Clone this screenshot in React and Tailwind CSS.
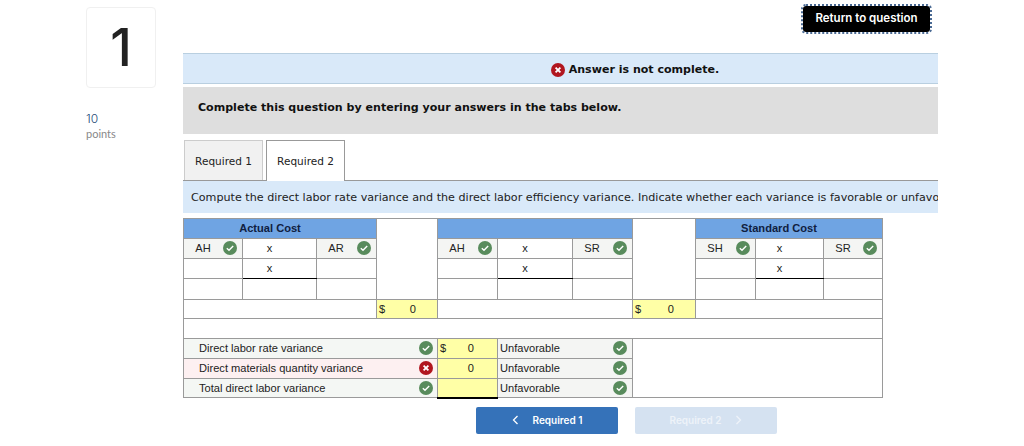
import React from 'react';

const StatusIcon = ({ ok = true, size = 14 }) => (
  <svg width={size} height={size} viewBox="0 0 14 14" className="shrink-0">
    <circle cx="7" cy="7" r="7" fill={ok ? '#588b5c' : '#b1161f'} />
    {ok ? (
      <path d="M3.8 7.2l2.2 2.1 4.2-4.4" fill="none" stroke="#fff" strokeWidth="1.4" />
    ) : (
      <path d="M4.6 4.6l4.8 4.8M9.4 4.6l-4.8 4.8" fill="none" stroke="#fff" strokeWidth="1.8" />
    )}
  </svg>
);

const widths = [59, 74, 60, 61, 60, 75, 60, 63, 60, 68, 59];
const cell = 'border border-[#9a9a9a] p-0 text-[11.1px]';
const headCell = `${cell} bg-[#6fa4e3] pr-[20px] text-center font-bold text-[#10203f]`;
const timesCell = `${cell} pr-[20px]`;

const LabelCell = ({ label }) => (
  <td className={`${cell} bg-[#f4f5f3]`}>
    <div className="flex items-center justify-between pl-[4px] pr-[5px]">
      <span className="w-[30px] pb-[1px] text-center">{label}</span>
      <StatusIcon />
    </div>
  </td>
);

const VarianceRow = ({ label, ok = true, dollar, value, underline, height = 'h-[20px]', children }) => (
  <tr className={height}>
    <td colSpan={4} className={`${cell} ${ok ? 'bg-[#f4f7f4]' : 'bg-[#fdf0f1]'}`}>
      <div className="flex items-center justify-between pl-[15px] pr-[4px]">
        <span>{label}</span>
        <StatusIcon ok={ok} />
      </div>
    </td>
    <td className={`${cell} bg-[#ffffa6] ${underline ? 'border-b-2 border-b-black' : ''}`}>
      <div className="flex justify-between pl-[2px] pr-[23px]">
        <span>{dollar ? '$' : ''}</span>
        <span>{value}</span>
      </div>
    </td>
    <td colSpan={2} className={`${cell} bg-[#f4f5f3]`}>
      <div className="flex items-center justify-between pl-[2px] pr-[5px]">
        <span>Unfavorable</span>
        <StatusIcon />
      </div>
    </td>
    {children}
  </tr>
);

const App = () => {
  return (
    <div className="flex h-[446px] w-[1024px] overflow-hidden bg-white pl-[86px]">
      {/* Question number and points */}
      <div className="w-[97px] shrink-0 pt-[7px]">
        <div className="flex h-[81px] w-[70px] items-center justify-center rounded border border-[#f0f0f0] font-['Inter',sans-serif] text-[52px] font-medium text-[#222]">
          1
        </div>
        <div className="mt-[23px] font-['Inter',sans-serif] text-[12px] font-light leading-[16px] text-[#1f4e79]">10</div>
        <div className="font-['Lato',sans-serif] text-[11px] leading-[14px] text-[#888]">points</div>
      </div>

      <div className="w-[755px] shrink-0 overflow-hidden">
        {/* Return button */}
        <div className="flex h-[53px] justify-end pr-[8px] pt-[6px]">
          <button className="h-[26px] w-[127px] rounded-[3px] bg-black font-['Inter',sans-serif] text-[11.5px] font-semibold text-white outline-2 outline-offset-0 outline-dotted outline-[#4a6a94]">
            Return to question
          </button>
        </div>

        <div className="flex h-[31px] items-center justify-center border-y border-[#b9cfe0] bg-[#d9e9f9] pt-[2px] font-['DejaVu_Sans',sans-serif] text-[11.05px] font-bold text-[#111]">
          <span className="ml-[149px] flex items-center gap-[4px]">
            <StatusIcon ok={false} />
            <span className="pt-[1px]">Answer is not complete.</span>
          </span>
        </div>

        <div className="mt-[3px] h-[47px] bg-[#dedede] pl-[15px] pt-[14px] font-['DejaVu_Sans',sans-serif] text-[11.05px] font-bold leading-[14px] text-[#111]">
          Complete this question by entering your answers in the tabs below.
        </div>

        {/* Tabs */}
        <div className="mt-[6px] flex h-[41px] gap-[3px] border-b border-[#999] pl-[1px] font-['DejaVu_Sans',sans-serif] text-[10.5px] text-[#222]">
          <div className="flex h-[40px] w-[79px] items-center justify-center border-x border-t border-[#ccc] bg-[#f1f1f1] pt-[2px]">Required 1</div>
          <div className="flex h-[41px] w-[79px] items-center justify-center border-x border-t border-[#999] bg-white pt-[2px]">Required 2</div>
        </div>

        <div className="h-[32px] overflow-hidden whitespace-nowrap bg-[#d9e9f9] pl-[8px] pt-[10px] font-['DejaVu_Sans',sans-serif] text-[11.15px] leading-[14px] text-[#222]">
          Compute the direct labor rate variance and the direct labor efficiency variance. Indicate whether each variance is favorable or unfavorable.
        </div>

        {/* Variance table */}
        <table className="mt-[5px] w-[699px] table-fixed border-collapse text-center font-['Liberation_Sans',sans-serif] text-[#222]">
          <colgroup>
            {widths.map((w, i) => (
              <col key={i} style={{ width: w }} />
            ))}
          </colgroup>
          <tbody>
            <tr className="h-[20px]">
              <td colSpan={3} className={headCell}>Actual Cost</td>
              <td rowSpan={4} className={cell}></td>
              <td colSpan={3} className={headCell}></td>
              <td rowSpan={4} className={cell}></td>
              <td colSpan={3} className={headCell}>Standard Cost</td>
            </tr>
            <tr className="h-[20px]">
              <LabelCell label="AH" />
              <td className={timesCell}>x</td>
              <LabelCell label="AR" />
              <LabelCell label="AH" />
              <td className={timesCell}>x</td>
              <LabelCell label="SR" />
              <LabelCell label="SH" />
              <td className={timesCell}>x</td>
              <LabelCell label="SR" />
            </tr>
            <tr className="h-[20px]">
              <td className={cell}></td>
              <td className={`${timesCell} border-b-black pb-[1px]`}>x</td>
              <td className={cell}></td>
              <td className={cell}></td>
              <td className={`${timesCell} border-b-black pb-[1px]`}>x</td>
              <td className={cell}></td>
              <td className={cell}></td>
              <td className={`${timesCell} border-b-black pb-[1px]`}>x</td>
              <td className={cell}></td>
            </tr>
            <tr className="h-[21px]">
              {Array.from({ length: 9 }, (_, i) => (
                <td key={i} className={cell}></td>
              ))}
            </tr>
            <tr className="h-[19px]">
              <td colSpan={3} className={cell}></td>
              <td className={`${cell} bg-[#ffffa6]`}>
                <div className="flex justify-between pl-[2px] pr-[21px]"><span>$</span><span>0</span></div>
              </td>
              <td colSpan={3} className={cell}></td>
              <td className={`${cell} bg-[#ffffa6]`}>
                <div className="flex justify-between pl-[2px] pr-[21px]"><span>$</span><span>0</span></div>
              </td>
              <td colSpan={3} className={cell}></td>
            </tr>
            <tr className="h-[20px]">
              <td colSpan={11} className={cell}></td>
            </tr>
            <VarianceRow label="Direct labor rate variance" dollar value="0">
              <td colSpan={4} rowSpan={3} className={cell}></td>
            </VarianceRow>
            <VarianceRow label="Direct materials quantity variance" ok={false} value="0" />
            <VarianceRow label="Total direct labor variance" underline height="h-[19px]" />
          </tbody>
        </table>

        {/* Tab navigation */}
        <div className="ml-[293px] mt-[8px] flex gap-[17px] font-['Inter',sans-serif] text-[10px] font-semibold">
          <button className="flex h-[27px] w-[142px] items-center justify-center gap-[14px] rounded-[2px] bg-[#3572b9] text-white">
            <svg width="7" height="10" viewBox="0 0 7 10"><path d="M5.5 1L1.5 5l4 4" fill="none" stroke="#fff" strokeWidth="1.3" /></svg>
            Required 1
          </button>
          <button className="flex h-[27px] w-[142px] items-center justify-center gap-[14px] rounded-[2px] bg-[#d5e2f1] text-[#eef3f9]">
            Required 2
            <svg width="7" height="10" viewBox="0 0 7 10"><path d="M1.5 1l4 4-4 4" fill="none" stroke="#eef3f9" strokeWidth="1.3" /></svg>
          </button>
        </div>
      </div>
    </div>
  );
};

export default App;
